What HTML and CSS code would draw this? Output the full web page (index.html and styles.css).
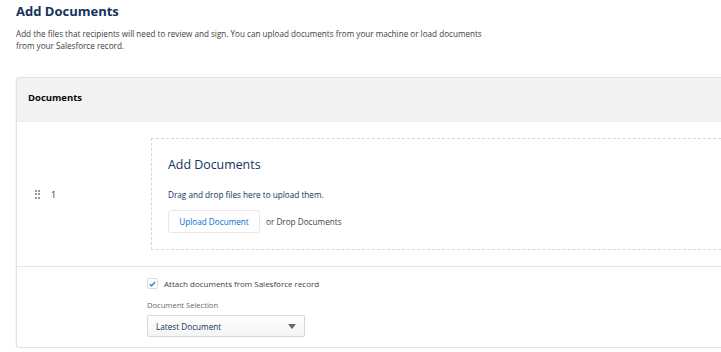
FILE: index.html
```html
<!DOCTYPE html>
<html lang="en">
<head>
    <meta charset="UTF-8">
    <title>Add Documents</title>
    <link rel="stylesheet" href="styles.css">
</head>
<body>
    <div class="page">
        <h1 class="pageTitle">Add Documents</h1>
        <p class="intro">Add the files that recipients will need to review and sign. You can upload documents from your machine or load documents<br>from your Salesforce record.</p>

        <div class="card">
            <div class="cardHead">Documents</div>
            <div class="docRow">
                <div class="rowIndex">
                    <span class="grip"></span>
                    <span class="num">1</span>
                </div>
                <div class="dropZone">
                    <h2 class="dropTitle">Add Documents</h2>
                    <p class="dropHint">Drag and drop files here to upload them.</p>
                    <div class="uploadLine">
                        <button class="btnUpload">Upload Document</button>
                        <span class="orDrop">or Drop Documents</span>
                    </div>
                </div>
            </div>
            <div class="sfRow">
                <label class="check">
                    <span class="box">
                        <svg width="7" height="6" viewBox="0 0 7 6"><path d="M0.8 3.2 L2.6 4.8 L6.2 0.9" fill="none" stroke="#1b7ee0" stroke-width="1.4"/></svg>
                    </span>
                    Attach documents from Salesforce record
                </label>
                <div class="fieldLabel">Document Selection</div>
                <div class="select">
                    <span>Latest Document</span>
                    <span class="caret"></span>
                </div>
            </div>
        </div>
    </div>
</body>
</html>
```
FILE: styles.css
```css
body{
    margin: 0;
    background: #fff;
    font-family: "Open Sans", "Liberation Sans", sans-serif;
    overflow: hidden;
}
.page{
    padding: 0 0 0 16px;
}
.pageTitle{
    margin: 0;
    font-size: 13px;
    font-weight: bold;
    color: #16325c;
    line-height: 22px;
}
.intro{
    margin: 6px 0 0;
    font-size: 8.15px;
    line-height: 12px;
    color: #3e3e3c;
}
.card{
    margin-top: 25px;
    border: 1px solid #e2e2e2;
    border-right: none;
    border-radius: 3px 0 0 3px;
    box-shadow: 0 1px 2px rgba(0,0,0,0.12);
    background: #fff;
}
.cardHead{
    height: 43px;
    line-height: 40px;
    padding-left: 11px;
    background: #f3f3f3;
    border-bottom: 1px solid #ececec;
    font-size: 9.5px;
    font-weight: bold;
    color: #080707;
}
.docRow{
    display: flex;
    align-items: center;
    padding: 16px 0 16px;
    border-bottom: 1px solid #e5e5e5;
}
.rowIndex{
    width: 134px;
    display: flex;
    align-items: center;
    padding-left: 18px;
    box-sizing: border-box;
}
.grip{
    height: 9px;
    width: 1px;
    border-left: 2px dotted #9a9a9a;
    border-right: 2px dotted #9a9a9a;
}
.num{
    margin-left: 11px;
    font-size: 9px;
    color: #16325c;
}
.dropZone{
    flex: 1;
    height: 112px;
    border: 1px dashed #d8d8d8;
    border-right: none;
    padding: 17px 16px 0;
    box-sizing: border-box;
}
.dropTitle{
    margin: 0;
    font-size: 12.4px;
    font-weight: normal;
    color: #16325c;
    line-height: 18px;
}
.dropHint{
    margin: 15px 0 0;
    font-size: 8.2px;
    line-height: 12px;
    color: #16325c;
}
.uploadLine{
    display: flex;
    align-items: center;
    margin-top: 9px;
}
.btnUpload{
    height: 23px;
    width: 92px;
    padding: 0;
    border: 1px solid #e8e8e8;
    border-radius: 3px;
    background: #fff;
    font-family: inherit;
    font-size: 8.2px;
    color: #0070d2;
}
.orDrop{
    margin-left: 6px;
    font-size: 8.2px;
    color: #444;
}
.sfRow{
    padding: 11px 0 10px 130px;
}
.check{
    display: flex;
    align-items: center;
    font-size: 8px;
    color: #3e3e3c;
}
.box{
    display: inline-flex;
    align-items: center;
    justify-content: center;
    width: 9px;
    height: 9px;
    border: 1px solid #dcdcdc;
    border-radius: 2px;
    margin-right: 6px;
}
.fieldLabel{
    margin-top: 11px;
    font-size: 7.6px;
    color: #696969;
}
.select{
    margin-top: 5px;
    width: 158px;
    height: 22px;
    box-sizing: border-box;
    border: 1px solid #d6d6d6;
    border-radius: 2px;
    background: linear-gradient(#fff, #f4f4f4);
    display: flex;
    align-items: center;
    justify-content: space-between;
    padding: 0 8px 0 8px;
    font-size: 8.2px;
    color: #16325c;
}
.caret{
    width: 0;
    height: 0;
    border-left: 4px solid transparent;
    border-right: 4px solid transparent;
    border-top: 5px solid #666;
}
```
